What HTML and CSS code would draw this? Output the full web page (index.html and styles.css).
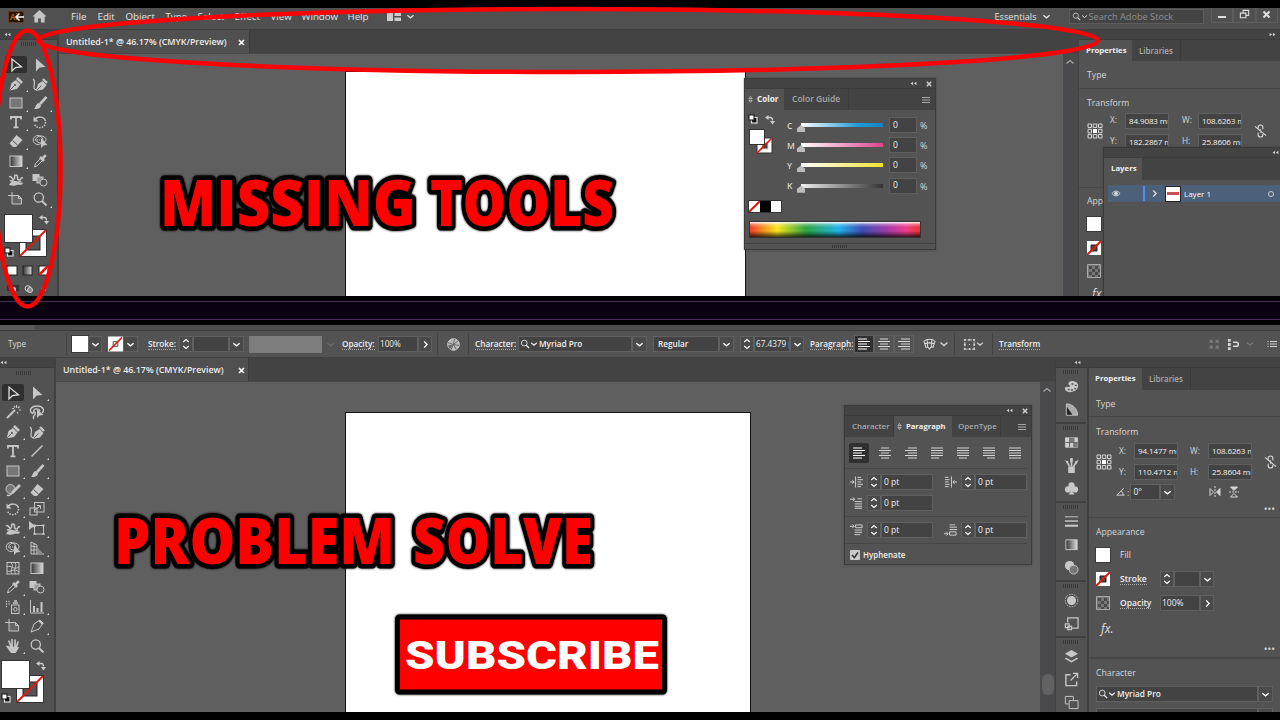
FILE: index.html
```html
<!DOCTYPE html>
<html lang="en">
<head>
<meta charset="utf-8">
<title>Missing Tools</title>
<link rel="stylesheet" href="styles.css">
</head>
<body>
<svg class="defs" aria-hidden="true">
  <defs>
    <linearGradient id="gr"><stop offset="0" stop-color="#333"/><stop offset="1" stop-color="#ddd"/></linearGradient>
  </defs>
  <symbol id="select" viewBox="0 0 16 16"><path d="M4 2v12l3.500-3.500 6-.8z" stroke-width="1.300"/></symbol>
  <symbol id="direct" viewBox="0 0 16 16"><path d="M4 1.500v13l3.700-4 5.800-.6z" fill="currentColor" stroke="none"/></symbol>
  <symbol id="pen" viewBox="0 0 16 16"><path d="M1.500 14.500l2-7.500 4.500-3 4.500 4.500-3.500 4.500z" fill="currentColor" stroke="none"/><path d="M9 2l5 5" stroke-width="2.600"/><path d="M2 14l4.500-4.500" stroke="#535353" stroke-width=".9"/><circle cx="7" cy="9" r="1" fill="#535353" stroke="none"/></symbol>
  <symbol id="curve" viewBox="0 0 16 16"><path d="M4 15l2-7 4.500-3 4 4-3.500 4.500z" fill="currentColor" stroke="none"/><path d="M11 3l4 4" stroke-width="2.400"/><path d="M5 14l4.500-4.500" stroke="#535353" stroke-width=".9"/><path d="M1 3c3 2 1 5 1 8s2 3 3 2" stroke-width="1.200"/></symbol>
  <symbol id="rect" viewBox="0 0 16 16"><rect x="2" y="3" width="12" height="10" fill="#777"/></symbol>
  <symbol id="brush" viewBox="0 0 16 16"><path d="M14.500 2L8 9" stroke-width="2.600"/><path d="M7 8l2 2c0 3-3 4.500-7 4 2-1.500 1.500-5.500 5-6z" fill="currentColor" stroke="none"/></symbol>
  <symbol id="type" viewBox="0 0 16 16"><path d="M3 5.500V3h10v2.500M8 3v10M5.500 13.300h5" stroke-width="1.800"/></symbol>
  <symbol id="line" viewBox="0 0 16 16"><path d="M2.500 13.500l11-11" stroke-width="1.400"/></symbol>
  <symbol id="rotate" viewBox="0 0 16 16"><path d="M3 6c2-4 9-4 10.500 1" stroke-width="1.500"/><path d="M13.500 8c0 7-10 7.500-11 1.500" stroke-dasharray="1.500 1.200" stroke-width="1.500"/><path d="M1.500 2.500v5h5z" fill="currentColor" stroke="none"/></symbol>
  <symbol id="eraser" viewBox="0 0 16 16"><path d="M8.500 2l6 5-6.500 7H5l-3.500-3.500z" fill="currentColor" stroke="none"/><path d="M4.500 7.500l5 4.500" stroke="#535353"/></symbol>
  <symbol id="builder" viewBox="0 0 16 16"><ellipse cx="6" cy="7" rx="4.800" ry="4.500"/><ellipse cx="9" cy="6.500" rx="5" ry="3.500"/><path d="M3 7h8" stroke-dasharray="1 1"/><path d="M9 5v10l2.500-2.600 4-.5z" fill="currentColor" stroke="none"/></symbol>
  <symbol id="gradient" viewBox="0 0 16 16"><rect x="2" y="3" width="12" height="10.500" fill="url(#gr)"/></symbol>
  <symbol id="dropper" viewBox="0 0 16 16"><path d="M2.500 14l1-3.500 6-6 2 2-6 6z"/><path d="M8 4l4 4M11 5l2.800-2.800" stroke-width="2.600"/></symbol>
  <symbol id="warp" viewBox="0 0 16 16"><path d="M1 5c3-2 3 4 5 2s-1-4 2-4 0 5 3 5 1-3 4-2M2 9c4-2 5 4 11 0" stroke-width="1.500"/><path d="M1 13c2-4 5-5 9-3 2 1 4 0 5 1-1 3-4 1-6 2s-5 1-8 0z" fill="currentColor" stroke="none"/></symbol>
  <symbol id="blend" viewBox="0 0 16 16"><rect x="1" y="2.500" width="6" height="6" fill="currentColor"/><rect x="5" y="5" width="6" height="6" fill="#999"/><circle cx="11.500" cy="10.500" r="3.500" fill="#535353"/></symbol>
  <symbol id="artboard" viewBox="0 0 16 16"><path d="M4 1v3.500M0 4.500h4M4 4.500h6.500l3 3V13H4z" fill="#666"/><path d="M10.500 4.500v3h3"/></symbol>
  <symbol id="zoom" viewBox="0 0 16 16"><circle cx="6.800" cy="6.500" r="4.600" stroke-width="1.300"/><path d="M10 10l4.500 4.500" stroke-width="2"/></symbol>
  <symbol id="wand" viewBox="0 0 16 16"><path d="M2 14l8-8" stroke-width="2"/><path d="M11.500 1v3M14 6h2M9 2l1 1.500M14.500 2.500L13 4M12 8l1 1.500M7 4.500h2" stroke-width="1.200"/></symbol>
  <symbol id="lasso" viewBox="0 0 16 16"><path d="M4 10C-1 7 2 2 8 2s8 4 5 7M4 10c-1-3 3-3 2 0s-3 3-1 5M5 8c-1-4 5-4 6-1" stroke-width="1.400"/><path d="M8 5v9l2.500-2.500 4-.5z" fill="currentColor" stroke="none"/></symbol>
  <symbol id="shaper" viewBox="0 0 16 16"><circle cx="5.500" cy="7" r="4.500" fill="#777"/><path d="M15 3l-8 8" stroke-width="2.800"/><path d="M7 11c-1 2-3 3-5 2" stroke-width="1.500"/></symbol>
  <symbol id="scale" viewBox="0 0 16 16"><rect x="5.500" y="1.500" width="9.500" height="9.500"/><rect x="1" y="7" width="7" height="7"/><path d="M5 10l6-5M8 4.500h3.500V8"/></symbol>
  <symbol id="free" viewBox="0 0 16 16"><path d="M0 0v9l3-2.500 4.500-.5z" fill="currentColor" stroke="none"/><rect x="5.500" y="4.500" width="9" height="8.500"/><path d="M4.500 3.500h2v2h-2zM13.500 3.500h2v2h-2zM4.500 12h2v2h-2zM13.500 12h2v2h-2z" fill="currentColor" stroke="none"/></symbol>
  <symbol id="persp" viewBox="0 0 16 16"><path d="M2 2v12h13M2 2l6 3v9M2 6l6 1M2 10h6M5 3.500V14"/><path d="M9 13.500V8l5 5.500z" fill="#888" stroke="none"/></symbol>
  <symbol id="mesh" viewBox="0 0 16 16"><rect x="2" y="2.500" width="12" height="11.500"/><path d="M2 7c5-3 6 4 12 0M2 11c4 2 6-4 12 1M6 3c4 3-2 7 1 11M10 3c3 3-3 7 1 11"/></symbol>
  <symbol id="spray" viewBox="0 0 16 16"><rect x="6.500" y="6" width="7.500" height="8.500"/><circle cx="10.300" cy="10.300" r="1.800"/><path d="M8 4h5M9 2h3M1 2.500h1M3.500 2.500h1M1 5h1M3.500 5h1M1 7.500h1" stroke-width="1.500"/></symbol>
  <symbol id="graph" viewBox="0 0 16 16"><path d="M1.500 1v13H15"/><path d="M5 13V7M8.500 13V9M12.500 13V3" stroke-width="2"/></symbol>
  <symbol id="slice" viewBox="0 0 16 16"><path d="M2 14l3-8 6-4 3 3-4 6z"/><path d="M10 2.500l4 3.500" stroke-width="2.200"/></symbol>
  <symbol id="hand" viewBox="0 0 16 16"><path d="M4 3l2 6M7 1.500v7M10 2v7M13 4l-2 6" stroke-width="1.700" stroke-linecap="round"/><path d="M1.500 8l3 1h7l2 .5-3 5H6z" fill="currentColor"/></symbol>
  <symbol id="swap" viewBox="0 0 10 10"><path d="M2.500 2.500h3q2 0 2 3" stroke-width="1.300"/><path d="M0 2.500L3.500 0v5zM7.500 9.500L5 6h5z" fill="currentColor" stroke="none"/></symbol>
  <symbol id="default" viewBox="0 0 10 10"><rect x="3.500" y="3.500" width="5.500" height="5.500" fill="#111" stroke="#ddd" stroke-width="1.200"/><rect x="1" y="1" width="5" height="5" fill="#fff" stroke="#111"/></symbol>
  <symbol id="down" viewBox="0 0 10 10"><path d="M1.500 3.500L5 6.500l3.500-3" stroke-width="1.400"/></symbol>
  <symbol id="right" viewBox="0 0 10 10"><path d="M3.500 1.500L6.800 5 3.500 8.500" stroke-width="1.500"/></symbol>
  <symbol id="up" viewBox="0 0 10 10"><path d="M1.500 6.500L5 3.500l3.500 3" stroke-width="1.100"/></symbol>
  <symbol id="updown" viewBox="0 0 10 14"><path d="M1.500 4.500l3.500-3 3.500 3M1.500 9.500l3.500 3 3.500-3" stroke-width="1.500"/></symbol>
  <symbol id="sort" viewBox="0 0 6 10"><path d="M1 4l2-2.500L5 4zM1 6l2 2.500L5 6z" stroke-width=".7"/></symbol>
  <symbol id="rew" viewBox="0 0 8 6"><path d="M3.500.8v4.400L.5 3zM7.500.8v4.400l-3-2.200z" fill="currentColor" stroke="none"/></symbol>
  <symbol id="fwd" viewBox="0 0 8 6"><path d="M.5.800v4.400L3.500 3zM4.500.8v4.400l3-2.200z" fill="currentColor" stroke="none"/></symbol>
  <symbol id="x" viewBox="0 0 8 8"><path d="M1.800 1.800l4.400 4.400M6.200 1.800L1.800 6.200" stroke-width="1.500"/></symbol>
  <symbol id="menu" viewBox="0 0 10 8"><path d="M1 1.500h8M1 4h8M1 6.500h8"/></symbol>
  <symbol id="ref" viewBox="0 0 16 16"><path d="M1 1h3.500v3.500H1zM6.300 1h3.500v3.500H6.300zM11.500 1H15v3.500h-3.500zM1 6.300h3.500v3.500H1zM11.500 6.300H15v3.500h-3.500zM1 11.500h3.500V15H1zM6.300 11.500h3.500V15H6.300zM11.500 11.500H15V15h-3.500z"/><path d="M6 6h4v4H6z" fill="#fff" stroke="none"/></symbol>
  <symbol id="unlink" viewBox="0 0 14 16"><path d="M4.500 6V4a2.500 2.500 0 0 1 5 0v2M4.500 10v2a2.500 2.500 0 0 0 5 0v-2M7 6v4M1 3l12 10" stroke-width="1.200"/></symbol>
  <symbol id="none" viewBox="0 0 14 14"><path d="M0 0h14v14H0z" fill="#fff" stroke="none"/><path d="M4 4h6v6H4z" fill="#444" stroke="#222"/><path d="M0 14L14 0" stroke="#e0190f" stroke-width="2"/></symbol>
  <symbol id="nonelight" viewBox="0 0 16 16"><path d="M0 0h16v16H0z" fill="#fff" stroke="none"/><path d="M5.500 5.500h5v5h-5z" stroke="#444"/><path d="M1 15L15 1" stroke="#d8241b" stroke-width="1.700"/></symbol>
  <symbol id="nofill" viewBox="0 0 12 12"><path d="M0 0h12v12H0z" fill="#fff" stroke="none"/><path d="M0 12L12 0" stroke="#e0190f" stroke-width="2.200"/></symbol>
  <symbol id="checker" viewBox="0 0 14 14"><path d="M.5.500h13v13H.5z" fill="#777" stroke="#aaa"/><path d="M2 2h3v3H2zM8 2h3v3H8zM5 5h3v3H5zM2 8h3v3H2zM8 8h3v3H8zM5 11h3v2H5zM11 5h2v3h-2zM11 11h2v2h-2z" fill="#4a4a4a" stroke="none"/></symbol>
  <symbol id="al" viewBox="0 0 14 12"><path d="M1 1h9M1 3.500h12M1 6h9M1 8.500h12M1 11h9"/></symbol>
  <symbol id="ac" viewBox="0 0 14 12"><path d="M3 1h8M1 3.500h12M3 6h8M1 8.500h12M3 11h8"/></symbol>
  <symbol id="ar" viewBox="0 0 14 12"><path d="M4 1h9M1 3.500h12M4 6h9M1 8.500h12M4 11h9"/></symbol>
  <symbol id="jl" viewBox="0 0 14 12"><path d="M1 1h12M1 3.500h12M1 6h12M1 8.500h12M1 11h8"/></symbol>
  <symbol id="jc" viewBox="0 0 14 12"><path d="M1 1h12M1 3.500h12M1 6h12M1 8.500h12M3 11h8"/></symbol>
  <symbol id="jr" viewBox="0 0 14 12"><path d="M1 1h12M1 3.500h12M1 6h12M1 8.500h12M5 11h8"/></symbol>
  <symbol id="jj" viewBox="0 0 14 12"><path d="M1 1h12M1 3.500h12M1 6h12M1 8.500h12M1 11h12"/></symbol>
  <symbol id="indl" viewBox="0 0 14 12"><path d="M0 6h4M2.500 4l2 2-2 2M6 0v12M8 1h4M8 3.500h6M8 6h4M8 8.500h6M8 11h4"/></symbol>
  <symbol id="indr" viewBox="0 0 14 12"><path d="M14 6h-4M11.500 4l-2 2 2 2M8 0v12M1 1h4M1 3.500h5M1 6h4M1 8.500h5M1 11h4"/></symbol>
  <symbol id="indf" viewBox="0 0 14 12"><path d="M0 2h5M3 0l2 2-2 2M8 1.500h5M5 4.500h8M5 7h8M5 9.500h8M5 11.700h8"/></symbol>
  <symbol id="spb" viewBox="0 0 14 12"><path d="M0 2h4M2.500 0l2 2-2 2M6 .5h7v3H6zM5 6h8M5 8.500h8M5 11h6"/></symbol>
  <symbol id="spa" viewBox="0 0 14 12"><path d="M0 10h4M2.500 8l2 2-2 2M6 8h7v3.500H6zM6 .500h6M6 3h8M6 5.500h8"/></symbol>
  <symbol id="globe" viewBox="0 0 14 14"><circle cx="7" cy="7" r="6.300" fill="#bbb" stroke="#ccc"/><path d="M7 7L1 5M7 7l1-6M7 7l6 1M7 7l-3 6M7 7l5-4M7 7l3 5.500" stroke="#666"/><path d="M7 7L1 8l2 4z" fill="#666" stroke="none"/></symbol>
  <symbol id="envelope" viewBox="0 0 14 14"><path d="M1 3.500c3-3 9-3 12 0-.5 3-2 4-2 6.500-2-1-3 0-4 2-1-2-2-3-4-2 0-2.500-1.500-3.500-2-6.500zM4.500 1.500L5 10M9.500 1.500L9 10M1.500 6q5.500-1.500 11 0" stroke-width="1.100"/></symbol>
  <symbol id="isolate" viewBox="0 0 14 14"><path d="M2 2h10v10H2z" stroke-dasharray="1.500 1.500"/><path d="M1 1h2v2H1zM6 1h2v2H6zM11 1h2v2h-2zM1 6h2v2H1zM11 6h2v2h-2zM1 11h2v2H1zM6 11h2v2H6zM11 11h2v2h-2zM6.500 6.500h1v1h-1z" fill="currentColor" stroke="none"/></symbol>
  <symbol id="dots4" viewBox="0 0 12 12"><path d="M1.500 1.500h3v3h-3zM7 1.500h3v3H7zM1.500 7h3v3h-3zM7 7h3v3H7z" fill="currentColor" stroke="none"/></symbol>
  <symbol id="magnet" viewBox="0 0 14 14"><path d="M1 1h3v3H1zM1 5.500h3v3H1zM1 10h3v3H1z" fill="currentColor" stroke="none"/><path d="M6.500 4.500h3.500a2.200 2.200 0 0 1 0 4.400H6.500" stroke-width="1.700"/></symbol>
  <symbol id="list" viewBox="0 0 10 8"><path d="M3 1.500h7M3 4h7M3 6.500h7M.500 1.500h1M.5 4h1M.5 6.500h1" stroke-width="1.200"/></symbol>
  <symbol id="angle" viewBox="0 0 14 12"><path d="M10 1L1 10h10M6 5q4 1 3 5" stroke-width="1.200"/></symbol>
  <symbol id="fliph" viewBox="0 0 12 12"><path d="M1 2.500v7L4.500 6z" /><path d="M11 2.500v7L7.500 6z" fill="currentColor"/><path d="M6 0v12" stroke-dasharray="2 1"/></symbol>
  <symbol id="flipv" viewBox="0 0 12 12"><path d="M2.500 1h7L6 4.500z" fill="currentColor"/><path d="M2.500 11h7L6 7.500z"/><path d="M1 6h10" stroke-dasharray="2 1"/></symbol>
  <symbol id="palette" viewBox="0 0 16 16"><path d="M8 2c5 0 7.500 2.500 7 6-.5 4-5 6-9 6-3 0-5-1.500-5-3.500S3 8 4.500 8.500 7 8 6 7 3 3 8 2z" fill="currentColor" stroke="none"/><path d="M8 4.500h2v1.500H8zM11.500 6h2v1.500h-2zM11 9.500h2V11h-2zM7.500 11h2v1.500h-2zM4 10.500h2V12H4z" fill="#4a4a4a" stroke="none"/></symbol>
  <symbol id="guide" viewBox="0 0 16 16"><path d="M2.500 2v12h12C14.500 7 9 2 2.500 2z" fill="#aaa"/><path d="M3 5v8.500h6z" fill="#222" stroke="none"/></symbol>
  <symbol id="swatches" viewBox="0 0 16 16"><path d="M1.500 3h13v10h-13z" fill="#d0d0d0"/><path d="M1.500 8h13M6 3v10M10.500 3v10" stroke="#555"/><path d="M6 3h4.500v5H6zM10.500 8h4v5h-4z" fill="#777" stroke="none"/></symbol>
  <symbol id="brushes" viewBox="0 0 16 16"><path d="M4.500 9h7v7h-7z" fill="currentColor" stroke="none"/><path d="M6 9L3 4M8 9V1M10 9l3.500-5" stroke-width="1.700"/><path d="M.5 2.500l4 1v3zM6.700-.5h2.600v5H6.700zM15.500 2l-4 2 2 2.500z" fill="currentColor" stroke="none"/></symbol>
  <symbol id="club" viewBox="0 0 16 16"><g fill="currentColor" stroke="none"><circle cx="8" cy="4.500" r="3.300"/><circle cx="4.300" cy="9" r="3.300"/><circle cx="11.700" cy="9" r="3.300"/><path d="M7.300 6h1.500l.5 6 2 2.500H4.700l2-2.500z"/></g></symbol>
  <symbol id="stroke" viewBox="0 0 16 16"><path d="M1 3h14" /><path d="M1 7.500h14" stroke-width="1.500"/><path d="M1 12.500h14" stroke-width="2.200"/></symbol>
  <symbol id="transp" viewBox="0 0 16 16"><circle cx="6" cy="6" r="5" fill="currentColor" stroke="none"/><circle cx="10.300" cy="10.300" r="4.700" fill="#777"/></symbol>
  <symbol id="sun" viewBox="0 0 16 16"><circle cx="8" cy="8" r="4.800" fill="currentColor" stroke="none"/><circle cx="8" cy="8" r="6.700" stroke-dasharray="1.500 1.300"/></symbol>
  <symbol id="styles" viewBox="0 0 16 16"><path d="M4 7V2h11v11H8.500" stroke-width="1.300"/><path d="M1.500 8.500h4v4h-4zM4 11h4v3.500H4z" stroke-width="1.300"/></symbol>
  <symbol id="layers" viewBox="0 0 16 16"><path d="M8 1l7 4-7 4-7-4z" fill="currentColor" stroke="none"/><path d="M2 9l6 3.500L14 9l1 1.500-7 4-7-4z" fill="currentColor" stroke="none"/></symbol>
  <symbol id="export" viewBox="0 0 16 16"><path d="M7 3H2v11.500h11.500V10" stroke-width="1.500"/><path d="M7 9l7-7M9.500 1.500h5v5" stroke-width="1.400"/></symbol>
  <symbol id="boards" viewBox="0 0 16 16"><path d="M5 9.500H1.500v-8H10V6"/><path d="M5.500 6H15v8.500H5.500z"/></symbol>
  <symbol id="home" viewBox="0 0 16 16"><path d="M8 1l7.500 7h-2v6.500h-4V10h-3v4.500h-4V8h-2z" fill="currentColor" stroke="none"/></symbol>
  <symbol id="arrange" viewBox="0 0 14 10"><path d="M0 0h6v9H0zM7.500 0H14v4H7.500zM7.500 5.500H14V9H7.500z" fill="currentColor" stroke="none"/></symbol>
  <symbol id="restore" viewBox="0 0 12 12"><path d="M1.500 4.500h6v5h-6zM4.500 4V1.500h6v5.500H8" stroke-width="1.200"/></symbol>
  <symbol id="eye" viewBox="0 0 12 8"><path d="M1 4q5-6 10 0-5 6-10 0z"/><circle cx="6" cy="4" r="1.800" fill="currentColor"/></symbol>
</svg>

<main class="stage">
  <section class="shot shot-top">
    <header class="menubar">
      <span class="logo"><b>Ai</b><svg viewBox="0 0 10 10"><path d="M9.500 5H2M5 1.500L1.500 5 5 8.500" stroke="#fff" stroke-width="1.500"/></svg></span>
      <svg class="home"><use href="#home"/></svg>
      <nav class="menus"><span class="wa">File</span><span class="wb">Edit</span><span class="wc">Object</span><span class="wd">Type</span><span class="we">Select</span><span class="wf">Effect</span><span class="wg">View</span><span class="wh">Window</span><span class="wi">Help</span></nav>
      <svg class="arrange"><use href="#arrange"/></svg><svg class="chev"><use href="#down"/></svg>
      <div class="workspace-pick"><span>Essentials</span><svg class="chev"><use href="#down"/></svg></div>
      <div class="stock"><svg class="mag"><use href="#zoom"/></svg><svg class="chev sm"><use href="#down"/></svg><span>Search Adobe Stock</span></div>
      <div class="winbtns"><span><i></i></span><span><svg class="chev12"><use href="#restore"/></svg></span><span><svg class="chev12"><use href="#x"/></svg></span></div>
    </header>
    <div class="body">
      <aside class="tools">
        <div class="phead"><svg class="rew"><use href="#rew"/></svg></div>
        <div class="grip"></div>
        <div class="toolgrid">
          <span class="on"><svg><use href="#select"/></svg></span><span><svg><use href="#direct"/></svg></span>
          <span class="more"><svg><use href="#pen"/></svg></span><span><svg><use href="#curve"/></svg></span>
          <span class="more"><svg><use href="#rect"/></svg></span><span class="more"><svg><use href="#brush"/></svg></span>
          <span class="more"><svg><use href="#type"/></svg></span><span class="more"><svg><use href="#rotate"/></svg></span>
          <span class="more"><svg><use href="#eraser"/></svg></span><span><svg><use href="#builder"/></svg></span>
          <span class="more"><svg><use href="#gradient"/></svg></span><span><svg><use href="#dropper"/></svg></span>
          <span><svg><use href="#warp"/></svg></span><span><svg><use href="#blend"/></svg></span>
          <span><svg><use href="#artboard"/></svg></span><span class="more"><svg><use href="#zoom"/></svg></span>
        </div>
        <svg class="fillstroke" viewBox="0 0 50 46"><rect x="15.500" y="15.500" width="27" height="27" fill="#fff" stroke="#333"/><rect x="22" y="22" width="14" height="14" fill="#535353" stroke="#222"/><path d="M16 42L42 16" stroke="#e0190f" stroke-width="2"/><rect x=".5" y=".5" width="28" height="28" fill="#fff" stroke="#333"/><use href="#swap" x="35" y="1" width="10" height="10" color="#ccc"/><use href="#default" x="0" y="33" width="10" height="10"/></svg>
        <svg class="modes" viewBox="0 0 50 26"><rect x="3" y="1" width="10" height="9" fill="#fff" stroke="#222"/><rect x="19" y="1" width="9" height="9" fill="url(#gr)" stroke="#222"/><rect x="35" y="1" width="9" height="9" fill="#fff" stroke="#222"/><path d="M35 10l9-9" stroke="#e0190f" stroke-width="2.500"/><path d="M3 20h12v6H3z" fill="#333" stroke="none"/><g stroke="none" fill="#bbb"><path d="M7 26v-3l3-1.500 2 1.500v3zM37 26v-3l3-1.500 2 1.500v3z"/></g><circle cx="24" cy="23.500" r="2.800"/><circle cx="26" cy="25" r="2.500" fill="#888"/></svg>
      </aside>
      <div class="doc">
        <div class="tabstrip"><div class="doctab"><span>Untitled-1* @ 46.17% (CMYK/Preview)</span><svg class="tabx"><use href="#x"/></svg></div></div>
        <div class="canvas"><div class="artboard ab1"></div><div class="scroll"><svg><use href="#up"/></svg></div></div>
      </div>
      <aside class="props">
        <div class="phead end"><svg class="rew"><use href="#fwd"/></svg></div>
        <div class="tabs"><b>Properties</b><span>Libraries</span></div>
        <div class="row title t1">Type</div>
        <div class="row title t2">Transform</div>
        <div class="xywh">
          <svg class="refpt"><use href="#ref"/></svg>
          <div class="pairs"><label>X:</label><span class="field">84.9083 mm</span><label>W:</label><span class="field">108.6263 mm</span><label>Y:</label><span class="field">182.2867 mm</span><label>H:</label><span class="field">25.8606 mm</span></div>
          <svg class="unlink"><use href="#unlink"/></svg>
        </div>
        <div class="row title t3">Appearance</div>
        <div class="swcol"><i class="white"></i><svg><use href="#none"/></svg><svg><use href="#checker"/></svg><em>fx.</em></div>
      </aside>
    </div>

    <div class="panel color-panel">
      <div class="phead end"><svg class="rew"><use href="#rew"/></svg><svg class="px"><use href="#x"/></svg></div>
      <div class="tabs"><b><svg class="sort"><use href="#sort"/></svg>Color</b><span>Color Guide</span><svg class="pmenu"><use href="#menu"/></svg></div>
      <div class="color-body">
        <svg class="mini" viewBox="0 0 28 46"><use href="#default" x="-1" y="-2" width="10" height="10"/><use href="#swap" x="16" y="-1" width="10" height="10" color="#ccc"/><rect x="8" y="22" width="15" height="15" fill="#fff" stroke="#333"/><rect x="13" y="27" width="6" height="6" fill="#444"/><path d="M8 37l15-15" stroke="#e0190f" stroke-width="1.600"/><rect x=".5" y="13.500" width="15" height="15" fill="#fff" stroke="#333"/></svg>
        <div class="sliders">
          <div><label>C</label><i class="tr c"></i><span class="field">0</span><u>%</u></div>
          <div><label>M</label><i class="tr m"></i><span class="field">0</span><u>%</u></div>
          <div><label>Y</label><i class="tr y"></i><span class="field">0</span><u>%</u></div>
          <div><label>K</label><i class="tr k"></i><span class="field">0</span><u>%</u></div>
        </div>
      </div>
      <div class="chips"><svg><use href="#nofill"/></svg><i class="bk"></i><i class="wt"></i></div>
      <div class="spectrum"></div>
      <div class="foot"><i class="grip"></i></div>
    </div>

    <div class="panel layers-panel">
      <div class="phead end"><svg class="rew"><use href="#rew"/></svg></div>
      <div class="tabs"><b>Layers</b></div>
      <div class="layer"><svg class="eye"><use href="#eye"/></svg><i class="lc"></i><svg class="chev"><use href="#right"/></svg><span class="thumb"><i></i></span><span class="lname">Layer 1</span><i class="target"></i></div>
    </div>
  </section>

  <div class="divider"></div>

  <section class="shot shot-bottom">
    <div class="strip"></div>
    <div class="control">
      <span class="txt w59 m8 sep">Type</span>
      <i class="white w16 m5"></i><span class="dd w14"><svg><use href="#down"/></svg></span>
      <svg class="sw w15 m6"><use href="#nonelight"/></svg><span class="dd w15"><svg><use href="#down"/></svg></span>
      <span class="txt link m10 w31"><u>Stroke:</u></span><span class="dd w14"><svg class="ud"><use href="#updown"/></svg></span><span class="cf w36"></span><span class="dd w15"><svg><use href="#down"/></svg></span>
      <i class="greybar m5"></i><span class="w16 dim"><svg><use href="#down"/></svg></span>
      <span class="txt link m4 w36"><u>Opacity:</u></span><span class="cf w40 clip">100%</span><span class="dd w14"><svg><use href="#right"/></svg></span>
      <span class="w6 sep"></span><span class="w31 sep mid"><svg class="s14"><use href="#globe"/></svg></span>
      <span class="txt link m6 w43"><u>Character:</u></span><span class="cf w114"><svg class="s10"><use href="#zoom"/></svg><svg class="s8"><use href="#down"/></svg><b>Myriad Pro</b></span><span class="dd w15"><svg><use href="#down"/></svg></span>
      <span class="cf w66 m6"><b>Regular</b></span><span class="dd w15"><svg><use href="#down"/></svg></span>
      <span class="dd w14 m6"><svg class="ud"><use href="#updown"/></svg></span><span class="cf w36 clip">67.4379 pt</span><span class="dd w14"><svg><use href="#down"/></svg></span>
      <span class="txt link m6 w44"><u>Paragraph:</u></span>
      <span class="ab on"><svg><use href="#al"/></svg></span><span class="ab"><svg><use href="#ac"/></svg></span><span class="ab"><svg><use href="#ar"/></svg></span>
      <span class="mid w31"><svg class="s14"><use href="#envelope"/></svg></span><svg class="s10 nudge"><use href="#down"/></svg><span class="w6 sep"></span>
      <span class="mid w38 sep"><svg class="s14"><use href="#isolate"/></svg><svg class="s8"><use href="#down"/></svg></span>
      <span class="txt link m6"><u>Transform</u></span>
      <span class="tail"><svg class="s14 faint"><use href="#dots4"/></svg><svg class="s14"><use href="#magnet"/></svg><svg class="s8 faint"><use href="#down"/></svg><svg class="s10"><use href="#list"/></svg></span>
    </div>
    <div class="body">
      <aside class="tools t-b">
        <div class="phead"><svg class="rew"><use href="#rew"/></svg></div>
        <div class="grip"></div>
        <div class="toolgrid">
          <span class="on"><svg><use href="#select"/></svg></span><span class="more"><svg><use href="#direct"/></svg></span>
          <span><svg><use href="#wand"/></svg></span><span><svg><use href="#lasso"/></svg></span>
          <span class="more"><svg><use href="#pen"/></svg></span><span><svg><use href="#curve"/></svg></span>
          <span class="more"><svg><use href="#type"/></svg></span><span class="more"><svg><use href="#line"/></svg></span>
          <span class="more"><svg><use href="#rect"/></svg></span><span class="more"><svg><use href="#brush"/></svg></span>
          <span class="more"><svg><use href="#shaper"/></svg></span><span class="more"><svg><use href="#eraser"/></svg></span>
          <span class="more"><svg><use href="#rotate"/></svg></span><span class="more"><svg><use href="#scale"/></svg></span>
          <span class="more"><svg><use href="#warp"/></svg></span><span class="more"><svg><use href="#free"/></svg></span>
          <span class="more"><svg><use href="#builder"/></svg></span><span class="more"><svg><use href="#persp"/></svg></span>
          <span><svg><use href="#mesh"/></svg></span><span><svg><use href="#gradient"/></svg></span>
          <span class="more"><svg><use href="#dropper"/></svg></span><span><svg><use href="#blend"/></svg></span>
          <span class="more"><svg><use href="#spray"/></svg></span><span class="more"><svg><use href="#graph"/></svg></span>
          <span><svg><use href="#artboard"/></svg></span><span class="more"><svg><use href="#slice"/></svg></span>
          <span class="more"><svg><use href="#hand"/></svg></span><span><svg><use href="#zoom"/></svg></span>
        </div>
        <svg class="fillstroke" viewBox="0 0 50 46"><rect x="15.500" y="15.500" width="27" height="27" fill="#fff" stroke="#333"/><rect x="22" y="22" width="14" height="14" fill="#535353" stroke="#222"/><path d="M16 42L42 16" stroke="#e0190f" stroke-width="2"/><rect x=".5" y=".5" width="28" height="28" fill="#fff" stroke="#333"/><use href="#swap" x="35" y="1" width="10" height="10" color="#ccc"/><use href="#default" x="0" y="33" width="10" height="10"/></svg>
      </aside>
      <div class="doc">
        <div class="tabstrip"><div class="doctab dt-b"><span>Untitled-1* @ 46.17% (CMYK/Preview)</span><svg class="tabx"><use href="#x"/></svg></div></div>
        <div class="canvas"><div class="artboard ab2"></div><div class="scroll"><svg><use href="#up"/></svg><i></i></div></div>
      </div>
      <aside class="dockwrap">
        <div class="phead end"><svg class="rew"><use href="#rew"/></svg></div>
        <div class="dock">
          <div class="grip"></div><svg class="d1"><use href="#palette"/></svg><svg class="d2"><use href="#guide"/></svg><hr>
          <div class="grip"></div><svg class="d1"><use href="#swatches"/></svg><svg class="d2"><use href="#brushes"/></svg><svg class="d2"><use href="#club"/></svg><hr>
          <div class="grip"></div><svg class="d1"><use href="#stroke"/></svg><svg class="d2"><use href="#gradient"/></svg><svg class="d2"><use href="#transp"/></svg><hr>
          <div class="grip"></div><svg class="d1"><use href="#sun"/></svg><svg class="d2"><use href="#styles"/></svg><hr>
          <div class="grip"></div><svg class="d1"><use href="#layers"/></svg><svg class="d2"><use href="#export"/></svg><svg class="d2"><use href="#boards"/></svg>
        </div>
      </aside>
      <aside class="props p-b">
        <div class="phead"></div>
        <div class="tabs"><b>Properties</b><span>Libraries</span></div>
        <div class="row title t1">Type</div>
        <div class="row title t2">Transform</div>
        <div class="xywh">
          <svg class="refpt"><use href="#ref"/></svg>
          <div class="pairs"><label>X:</label><span class="field">94.1477 mm</span><label>W:</label><span class="field">108.6263 mm</span><label>Y:</label><span class="field">110.4712 mm</span><label>H:</label><span class="field">25.8604 mm</span></div>
          <svg class="unlink"><use href="#unlink"/></svg>
        </div>
        <div class="anglerow"><svg><use href="#angle"/></svg><label>:</label><span class="cf">0°</span><span class="dd"><svg><use href="#down"/></svg></span><svg class="fl"><use href="#fliph"/></svg><svg class="fl2"><use href="#flipv"/></svg></div>
        <div class="dots">•••</div>
        <div class="row title t3">Appearance</div>
        <div class="arow"><i class="white"></i><span>Fill</span></div>
        <div class="arow"><svg class="sw"><use href="#none"/></svg><span class="link"><u>Stroke</u></span><span class="dd"><svg class="ud"><use href="#updown"/></svg></span><span class="cf w26"></span><span class="dd"><svg><use href="#down"/></svg></span></div>
        <div class="arow"><svg class="sw"><use href="#checker"/></svg><span class="link"><u>Opacity</u></span><span class="cf w40 clip">100%</span><span class="dd"><svg><use href="#right"/></svg></span></div>
        <div class="fx"><em>fx.</em></div>
        <div class="dots d-b">•••</div>
        <div class="row title t4">Character</div>
        <div class="frow"><span class="cf"><svg class="s10"><use href="#zoom"/></svg><svg class="s8"><use href="#down"/></svg><b>Myriad Pro</b></span><span class="dd w15"><svg><use href="#down"/></svg></span></div>
        <div class="frow"><span class="cf"></span><span class="dd w15"></span></div>
      </aside>
    </div>

    <div class="panel para-panel">
      <div class="phead end"><svg class="rew"><use href="#rew"/></svg><svg class="px"><use href="#x"/></svg></div>
      <div class="tabs"><span class="w49">Character</span><b class="w58"><svg class="sort"><use href="#sort"/></svg>Paragraph</b><span class="w49">OpenType</span><svg class="pmenu"><use href="#menu"/></svg></div>
      <div class="aligns"><span class="on"><svg><use href="#al"/></svg></span><span><svg><use href="#ac"/></svg></span><span><svg><use href="#ar"/></svg></span><span><svg><use href="#jl"/></svg></span><span><svg><use href="#jc"/></svg></span><span><svg><use href="#jr"/></svg></span><span><svg><use href="#jj"/></svg></span></div>
      <div class="indents">
        <div class="num"><svg><use href="#indl"/></svg><span class="dd"><svg class="ud"><use href="#updown"/></svg></span><span class="cf">0 pt</span></div>
        <div class="num"><svg><use href="#indr"/></svg><span class="dd"><svg class="ud"><use href="#updown"/></svg></span><span class="cf">0 pt</span></div>
        <div class="num"><svg><use href="#indf"/></svg><span class="dd"><svg class="ud"><use href="#updown"/></svg></span><span class="cf">0 pt</span></div>
      </div>
      <div class="indents spaces">
        <div class="num"><svg><use href="#spb"/></svg><span class="dd"><svg class="ud"><use href="#updown"/></svg></span><span class="cf">0 pt</span></div>
        <div class="num"><svg><use href="#spa"/></svg><span class="dd"><svg class="ud"><use href="#updown"/></svg></span><span class="cf">0 pt</span></div>
      </div>
      <div class="hyph"><svg viewBox="0 0 10 10"><rect width="10" height="10" rx="1" fill="#c8c8c8" stroke="none"/><path d="M2 5l2.300 2.500L8 2.500" stroke="#333" stroke-width="1.500"/></svg><b>Hyphenate</b></div>
    </div>
  </section>

  <svg class="overlay" viewBox="0 0 1280 720">
    <g stroke="#f90404" stroke-width="4.500" fill="none"><ellipse cx="568" cy="40.500" rx="530" ry="31.500"/><ellipse cx="27.500" cy="168.500" rx="33" ry="138"/></g>
    <g class="headline">
      <text x="160" y="226" textLength="256" lengthAdjust="spacingAndGlyphs">MISSING</text>
      <text x="430" y="226" textLength="184" lengthAdjust="spacingAndGlyphs">TOOLS</text>
      <text x="114" y="564" textLength="281" lengthAdjust="spacingAndGlyphs">PROBLEM</text>
      <text x="413" y="564" textLength="180" lengthAdjust="spacingAndGlyphs">SOLVE</text>
    </g>
    <rect class="subbox" x="397.500" y="617" width="267" height="75" rx="2"/>
    <text class="subtext" x="405" y="669" textLength="254" lengthAdjust="spacingAndGlyphs">SUBSCRIBE</text>
  </svg>
</main>
</body>
</html>
```

FILE: styles.css
```css
* { box-sizing: border-box; }
body { margin: 0; background: #000; font: 9px/1 "Open Sans", "Noto Sans", sans-serif; color: #d6d6d6; }
svg { fill: none; stroke: currentColor; stroke-width: 1; display: block; flex: none; overflow: visible; }
svg text { stroke: none; }
i, em { display: block; flex: none; }
label, u { text-decoration: none; }
.defs { position: absolute; width: 0; height: 0; }
.stage { width: 1280px; height: 720px; padding: 8px 0; position: relative; overflow: hidden; background: #000; display: flex; flex-direction: column; }
.shot { position: relative; overflow: hidden; background: #535353; display: flex; flex-direction: column; flex: none; }
.shot-top { height: 288px; }
.shot-bottom { height: 387px; }
.divider { height: 29px; flex: none; background: #0a0112; border-top: 5px solid #000; border-bottom: 5px solid #000; box-shadow: inset 0 1px #4c2c58, inset 0 -1px #4c2c58; }
.body { display: flex; flex: 1; min-height: 0; }

/* menu bar */
.menubar { height: 22px; flex: none; display: flex; align-items: center; background: #505050; border-bottom: 1px solid #404040; padding-bottom: 4px; }
.logo { display: flex; align-items: center; width: 16px; height: 12px; margin-left: 8px; background: #251306; border: 1px solid #6b3c1a; }
.logo b { font-size: 8px; color: #b05c1e; padding-left: 1px; }
.logo svg { width: 11px; height: 10px; margin-left: -4px; }
.home { width: 15px; height: 15px; margin-left: 8px; color: #c4c4c4; }
.menus { display: flex; margin-left: 24px; font-size: 9.700px; color: #e4e4e4; }
.wa { width: 26.500px; } .wb { width: 28px; } .wc { width: 40px; } .wd { width: 32px; } .we { width: 37px; } .wf { width: 36px; } .wg { width: 31px; } .wh { width: 46px; } .wi { width: 30px; }
.arrange { width: 14px; height: 10px; margin-left: 9px; color: #ccc; }
.chev { width: 9px; height: 9px; margin-left: 5px; color: #e0e0e0; }
.workspace-pick { display: flex; justify-content: space-between; width: 56px; margin-left: 580px; font-size: 9.200px; color: #e4e4e4; }
.workspace-pick .chev { margin-left: 0; }
.stock { display: flex; align-items: center; width: 135px; height: 15px; margin-left: 18px; padding-left: 2px; background: #444; border: 1px solid #5c5c5c; font-size: 9.200px; color: #8f8f8f; }
.mag { width: 9px; height: 9px; color: #ddd; }
.sm { margin: 0 1px 0 0; width: 7px; height: 7px; }
.winbtns { display: flex; margin-left: 7px; margin-top: -3px; }
.winbtns span { width: 22.500px; height: 15px; border: 1px solid #5d5d5d; border-top: 0; display: flex; align-items: center; justify-content: center; }
.winbtns i { width: 8px; height: 2px; background: #ddd; margin-top: 4px; }
.chev12 { width: 11px; height: 11px; color: #ddd; }

/* tool column */
.phead { height: 10px; flex: none; background: #434343; border-bottom: 1px solid #3c3c3c; display: flex; align-items: center; padding: 0 4px; color: #ccc; }
.phead.end { justify-content: flex-end; }
.rew { width: 7px; height: 5px; }
.px { width: 8px; height: 8px; margin-left: 8px; }
.panel .phead { padding-right: 2px; }
.tools { width: 59px; flex: none; background: #525252; border-right: 2px solid #414141; }
.grip { height: 4px; width: 16px; margin: 2px auto 0; background: repeating-linear-gradient(90deg, #393939 0 1px, #535353 1px 2px); }
.toolgrid { display: grid; grid-template-columns: 24px 24px; grid-auto-rows: 19.200px; margin: 9px 0 0 4px; color: #c6c6c6; }
.toolgrid span { display: flex; align-items: center; justify-content: center; position: relative; }
.toolgrid svg { width: 16px; height: 16px; }
.toolgrid .on { background: #303030; border-radius: 2px; margin: 1px; color: #ddd; }
.more::after { content: ""; position: absolute; right: 0; bottom: 1px; border: 1.500px solid; border-color: transparent #ddd #ddd transparent; }
.fillstroke { width: 50px; height: 46px; margin: 5px 0 0 4px; }
.modes { width: 50px; height: 26px; margin: 5px 0 0 4px; }
.t-b { width: 56px; }
.t-b .phead { padding-left: 0; }
.t-b .grip { margin: 3px auto 0 16px; }
.t-b .toolgrid { margin: 8px 0 0 .5px; grid-auto-rows: 19.460px; }
.t-b .fillstroke { margin: 5px 0 0 .5px; }

/* document */
.doc { flex: 1; min-width: 0; display: flex; flex-direction: column; }
.tabstrip { height: 23px; flex: none; background: #434343; }
.doctab { width: 191px; height: 23px; background: #505050; border-right: 1px solid #3b3b3b; display: flex; align-items: center; padding: 2px 0 0 7px; font-weight: 600; color: #ececec; }
.doctab span { width: 171px; flex: none; white-space: nowrap; font-size: 8.900px; }
.dt-b { width: 193px; }
.doctab.dt-b span { width: 174px; }
.tabx { width: 9px; height: 9px; color: #fff; }
.canvas { position: relative; flex: 1; background: #5f5f5f; border-top: 1px solid #484848; display: flex; justify-content: flex-end; }
.scroll { width: 15px; background: #4a4a4c; padding: 3px 2px; color: #aaa; display: flex; flex-direction: column; justify-content: space-between; }
.scroll svg { width: 10px; height: 10px; }
.scroll i { width: 12px; height: 21px; border-radius: 6px; background: #626262; margin-bottom: 14px; }
.artboard { position: absolute; background: #fff; border: 1px solid #111; border-bottom: 0; }
.ab1 { left: 286px; top: 17px; width: 401px; bottom: 0; }
.ab2 { left: 289px; top: 30px; width: 406px; bottom: 0; }

/* properties */
.props { width: 202px; flex: none; background: #535353; border-left: 1px solid #414141; overflow: hidden; }
.tabs { height: 21px; display: flex; align-items: stretch; background: #434343; color: #a9a9a9; flex: none; font-size: 8.500px; }
.tabs b, .tabs > span { display: flex; align-items: center; padding: 0 8px; font-weight: 600; border-right: 1px solid #3b3b3b; white-space: nowrap; }
.tabs b { background: #535353; color: #f0f0f0; font-weight: 700; padding: 0 7px; border: 0; }
.props .tabs b { width: 53px; font-size: 7.800px; }
.props .tabs > span { padding: 0 7px; font-size: 8px; }
.row { display: flex; align-items: center; padding-left: 8px; font-size: 8.700px; }
.t1 { height: 28px; border-bottom: 1px solid #484848; padding-top: 2px; }
.t2 { height: 24px; padding-top: 4px; }
.xywh { display: flex; align-items: center; padding-left: 8px; height: 36px; }
.refpt { width: 16px; height: 16px; }
.pairs { display: grid; grid-template-columns: 22px 44px 29px 44px; row-gap: 5px; align-items: center; }
.pairs label { font-size: 8.300px; padding-left: 13px; }
.pairs label:nth-child(4n + 1) { padding-left: 7px; }
.field, .cf { background: #434343; border: 1px solid #606060; height: 16px; display: flex; align-items: center; overflow: hidden; white-space: nowrap; color: #f0f0f0; font-size: 8.500px; }
.pairs .field { padding-left: 3px; font-size: 8px; letter-spacing: -.1px; }
.unlink { width: 13px; height: 16px; margin-left: 12px; }
.t3 { height: 28px; border-top: 1px solid #484848; margin-top: 38px; }
.swcol { padding: 2px 0 0 8px; display: grid; gap: 9.500px; }
.swcol svg, .swcol i, .arow .sw, .arow .white { width: 14px; height: 14px; }
.white { background: #fff; outline: 1px solid #3a3a3a; }
.swcol em { padding-left: 5px; font-size: 12px; }

.p-b { width: 193px; border-left-width: 2px; }
.p-b .row, .p-b .xywh { padding-left: 7px; }
.p-b .tabs { height: 22px; }
.p-b .tabs b { width: 53px; padding: 0 6px; }
.p-b .t1 { height: 27px; padding-top: 2px; }
.p-b .t2 { height: 26px; padding-top: 5px; }
.p-b .xywh { height: 37px; }
.p-b .pairs { grid-template-columns: 22px 44px 30px 44px; }
.p-b .pairs label:nth-child(4n + 3) { padding-left: 12px; }
.anglerow { display: flex; align-items: center; height: 18px; padding: 2px 0 0 27px; margin-top: 2px; }
.anglerow > svg { width: 11px; height: 10px; }
.anglerow .cf { width: 30px; margin-left: 1px; padding-left: 2px; }
.anglerow .dd { width: 15px; }
.anglerow .fl { width: 12px; height: 12px; margin-left: 34px; }
.anglerow .fl2 { width: 12px; height: 12px; margin-left: 7px; }
.dots { height: 15px; padding-right: 5px; text-align: right; font-size: 10px; line-height: 18px; }
.p-b .t3 { margin-top: 2px; height: 26px; padding-top: 4px; }
.arow { display: flex; align-items: center; height: 24px; padding-left: 7px; color: #ddd; font-size: 8.500px; }
.arow > span:nth-child(2) { width: 40px; margin-left: 10px; }
.fx { height: 27px; padding: 5px 0 0 12px; font: italic 12px "Noto Sans", sans-serif; }
.d-b { height: 15px; line-height: 14px; }
.t4 { border-top: 2px solid #474747; height: 29px; padding-top: 1px; }
.frow { display: flex; height: 16px; margin: 0 7px 6px 7px; }
.frow .cf { flex: 1; font-size: 8.300px; }

/* form bits */
.dd { display: flex; align-items: center; justify-content: center; height: 16px; border: 1px solid #5f5f5f; background: #4a4a4a; color: #fff; flex: none; width: 14px; }
.dd svg { width: 9px; height: 9px; }
.dd .ud { width: 8px; height: 12px; }
.cf { padding-left: 4px; flex: none; }
.cf b { font-weight: 600; }
.link { color: #eee; font-weight: 600; }
.link u { border-bottom: 1px dotted #aaa; }

/* control bar */
.strip { height: 6px; flex: none; background: linear-gradient(90deg, #5b5b5b 34px, #4d4d4d 35px); border-bottom: 1px solid #3b3b3b; }
.control { display: flex; align-items: center; height: 27px; flex: none; border-bottom: 1px solid #404040; font-size: 8.200px; white-space: nowrap; }
.control > * { flex: none; }
.control .cf { font-size: 8.200px; }
.control .white, .control .sw { height: 16px; }
.greybar { width: 73px; height: 17px; background: #7d7d7d; }
.sep { border-right: 1px solid #434343; height: 22px; display: flex; align-items: center; }
.mid { display: flex; align-items: center; justify-content: center; }
.dim { color: #6c6c6c; display: flex; justify-content: center; }
.dim svg { width: 9px; height: 9px; }
.s14 { width: 13px; height: 13px; } .s10 { width: 10px; height: 10px; } .s8 { width: 8px; height: 8px; }
.cf .s10 { margin-left: -3px; } .cf .s8 { margin-right: 1px; }
.nudge { margin-left: -6px; }
.faint { color: #787878; }
.ab { width: 20px; height: 18px; border: 1px solid #5f5f5f; display: flex; align-items: center; justify-content: center; }
.ab svg { width: 14px; height: 12px; }
.ab.on, .aligns .on { background: #303030; color: #fff; }
.control .tail { display: flex; align-items: center; gap: 6px; margin-left: auto; padding-right: 3px; }
.tail .s10 { margin-left: 7px; }
.control .clip, .arow .clip { padding-left: 1px; }
.w6 { width: 6px; } .w14 { width: 14px; } .w15 { width: 15px; } .w16 { width: 16px; } .w26 { width: 26px; } .w31 { width: 31px; } .w36 { width: 36px; } .w38 { width: 38px; } .w40 { width: 40px; } .w43 { width: 43px; } .w44 { width: 44px; } .w49 { width: 49px; } .w58 { width: 58px; } .w59 { width: 59px; } .w66 { width: 66px; } .w114 { width: 114px; }
.m4 { margin-left: 4px; } .m5 { margin-left: 5px; } .m6 { margin-left: 6px; } .m8 { margin-left: 8px; } .m10 { margin-left: 10px; }

/* icon dock */
.dockwrap { width: 32px; flex: none; background: #525252; border-left: 1px solid #404040; }
.dockwrap .phead { padding-right: 6px; }
.dock { display: flex; flex-direction: column; align-items: center; color: #c8c8c8; padding-right: 1px; }
.dock svg { width: 15px; height: 15px; }
.dock .grip { margin-top: 2px; }
.dock .d1 { margin-top: 4.500px; } .dock .d2 { margin-top: 8px; }
.dock hr { width: 100%; border: 0; border-top: 2px solid #404040; margin: 5.500px 0 0; }

/* floating panels */
.panel { position: absolute; background: #535353; border: 1px solid #3a3a3a; box-shadow: 0 0 2px #3338; }
.color-panel { left: 744px; top: 70px; width: 192px; height: 172px; }
.color-panel .tabs b { width: 39px; padding: 0 0 0 3px; font-size: 8.200px; }
.sort { width: 5px; height: 9px; margin-right: 4px; }
.pmenu { width: 10px; height: 8px; margin: 7px 4px 0 auto; }
.color-body { display: flex; height: 81px; padding: 6px 0 0 4px; }
.mini { width: 28px; height: 46px; }
.sliders > div { display: flex; align-items: center; height: 20.200px; }
.sliders { margin: -1px 0 0 8px; }
.sliders label { width: 16px; font-size: 8.500px; font-weight: 600; padding: 2px 0 0 2px; }
.tr { width: 82px; height: 4px; position: relative; }
.tr::after { content: ""; position: absolute; left: -4px; top: 2px; width: 8px; height: 7px; background: #bcbcbc; clip-path: polygon(50% 0, 100% 45%, 100% 100%, 0 100%, 0 45%); }
.c { background: linear-gradient(90deg, #fff, #1d9bd9 70%, #1585c4); } .m { background: linear-gradient(90deg, #fff, #dd4590); } .y { background: linear-gradient(90deg, #fff, #f1e32e); } .k { background: linear-gradient(90deg, #eee, #333); }
.sliders .field { width: 28px; margin-left: 6px; padding-left: 3px; }
.sliders u { padding: 1px 0 0 3px; }
.chips { display: flex; width: 32px; height: 11px; margin: 10px 0 0 4px; outline: 1px solid #333; }
.chips svg { width: 11px; height: 11px; } .chips i { width: 10.500px; height: 11px; } .bk { background: #000; } .wt { background: #fff; }
.spectrum { width: 172px; height: 17px; margin: 9px 0 0 4px; border: 1px solid #333; background: linear-gradient(#fff 0, #fff5 15%, #fff0 35%, #0000 60%, #000b 100%), linear-gradient(90deg, #f0402a, #f7e81c 16%, #2da544 33%, #22b4ea 52%, #3d4db5 66%, #b53aa6 83%, #ef3d85 92%, #e9352b); }
.foot { border-top: 1px solid #434343; margin-top: 5px; }
.foot .grip { margin-top: 1px; height: 3px; }
.layers-panel { left: 1103px; top: 139px; width: 178px; height: 152px; }
.layers-panel .phead { padding-right: 1px; }
.layers-panel .tabs { height: 22px; }
.layers-panel .tabs b { width: 38px; font-size: 7.800px; }
.layer { display: flex; align-items: center; height: 17px; margin: 5px 0 0 4px; background: #4c6079; color: #fff; }
.eye { width: 10px; height: 7px; margin-left: 3px; color: #ddd; }
.lc { width: 2px; height: 15px; background: #4b8bf5; margin-left: 22px; }
.layer .chev { margin-left: 5px; }
.thumb { width: 14px; height: 14px; background: #fff; outline: 1px solid #222; margin-left: 7px; padding: 5px 1px; }
.thumb i { height: 3px; background: #c95050; }
.lname { margin-left: 4px; font-size: 8px; }
.target { width: 6px; height: 6px; border: 1px solid #ccc; border-radius: 50%; margin-left: auto; margin-right: 6px; }
.para-panel { left: 844px; top: 80px; width: 188px; height: 160px; }
.para-panel .tabs { font-size: 7.900px; }
.para-panel .tabs > span { padding: 0 0 0 7px; } .para-panel .tabs > .w58 { padding: 0 0 0 3px; font-size: 7.600px; } .para-panel .w58 + span { padding: 0 0 0 6px; }
.aligns { display: flex; align-items: center; height: 32px; padding-left: 4px; margin: 0 4px 0 0; gap: 6px; border-bottom: 1px solid #484848; }
.aligns span { width: 20px; height: 20px; display: flex; align-items: center; justify-content: center; border-radius: 2px; }
.aligns svg { width: 14px; height: 12px; }
.indents { display: grid; grid-template-columns: 94px 84px; row-gap: 5px; padding: 5px 0 5px 5px; margin-right: 4px; border-bottom: 1px solid #484848; }
.num { display: flex; align-items: center; }
.num > svg { width: 13px; height: 12px; margin-right: 4px; }
.num .cf { width: 52px; padding-left: 2px; }
.hyph { display: flex; align-items: center; height: 21px; padding-left: 5px; font-size: 8px; color: #eee; }
.hyph svg { width: 10px; height: 10px; margin-right: 3px; }
.hyph b { font-weight: 600; }

/* captions drawn over both windows */
.overlay { position: absolute; left: 0; top: 0; width: 1280px; height: 720px; }
.headline { font: 800 63px "Open Sans", Roboto, sans-serif; filter: drop-shadow(0 0 1px #000); }
.headline text { fill: #f00; stroke: #000; stroke-width: 9px; stroke-linejoin: round; paint-order: stroke; }
.subbox { fill: #f00; stroke: #000; stroke-width: 5px; filter: drop-shadow(0 0 1px #000); }
.subtext { font: 900 39.500px Roboto, "Open Sans", sans-serif; fill: #fff; }
```
